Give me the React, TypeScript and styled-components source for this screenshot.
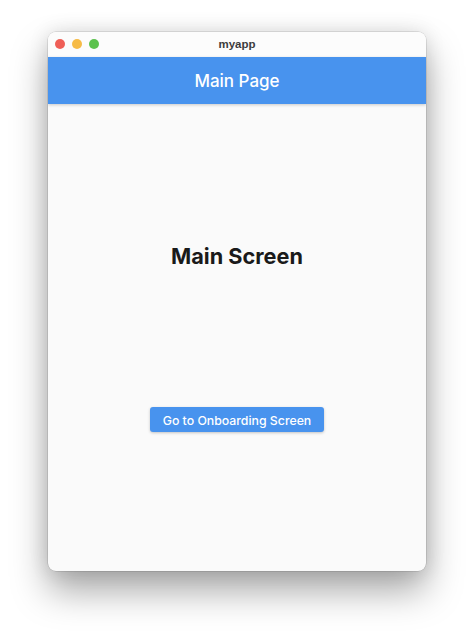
import React from "react";
import styled, { createGlobalStyle } from "styled-components";

const GlobalStyle = createGlobalStyle`
  html, body {
    margin: 0;
    height: 100%;
    background: #fff;
    overflow: hidden;
  }
`;

const Stage = styled.div`
  width: 474px;
  height: 634px;
  box-sizing: border-box;
  padding: 32px 48px 63px;
  font-family: Inter, "Liberation Sans", sans-serif;
`;

const Window = styled.div`
  height: 100%;
  display: flex;
  flex-direction: column;
  border-radius: 8px;
  overflow: hidden;
  background: #fafafa;
  box-shadow: 0 0 0 0.5px rgba(0, 0, 0, 0.18), 0 20px 36px rgba(0, 0, 0, 0.34),
    0 0 20px rgba(0, 0, 0, 0.12);
`;

const TitleBar = styled.div`
  position: relative;
  height: 24.5px;
  flex: none;
  display: flex;
  align-items: center;
  justify-content: center;
  background: #fcfcfc;
`;

const Lights = styled.div`
  position: absolute;
  left: 7px;
  top: 7px;
  display: flex;
  gap: 7px;
`;

const Light = styled.span<{ $color: string }>`
  width: 10px;
  height: 10px;
  border-radius: 50%;
  background: ${(p) => p.$color};
`;

const WindowTitle = styled.span`
  font-family: "Liberation Sans", Arial, sans-serif;
  font-size: 11.5px;
  font-weight: 700;
  color: #3d3d3d;
`;

const AppBar = styled.header`
  height: 47.5px;
  box-sizing: border-box;
  padding-top: 1px;
  flex: none;
  display: flex;
  align-items: center;
  justify-content: center;
  background: #4893ee;
  color: #fff;
  font-size: 17px;
  font-weight: 500;
  box-shadow: 0 1px 3px rgba(0, 0, 0, 0.2);
  z-index: 1;
`;

const Body = styled.main`
  flex: 1;
  display: flex;
  flex-direction: column;
  align-items: center;
  padding-top: 137px;
`;

const Heading = styled.h1`
  margin: 0 0 136px;
  font-size: 21.7px;
  line-height: 30px;
  font-weight: 700;
  color: #1a1a1a;
`;

const PrimaryButton = styled.button`
  width: 174px;
  height: 25px;
  padding: 1px 0 0;
  border: 0;
  border-radius: 3px;
  background: #4893ee;
  color: #fff;
  font-family: inherit;
  font-size: 12.3px;
  font-weight: 500;
  box-shadow: 0 1px 3px rgba(0, 0, 0, 0.22);
`;

export default function App() {
  return (
    <Stage>
      <GlobalStyle />
      <Window>
        <TitleBar>
          <Lights>
            <Light $color="#ef5f57" />
            <Light $color="#f6bb47" />
            <Light $color="#5cc24e" />
          </Lights>
          <WindowTitle>myapp</WindowTitle>
        </TitleBar>
        <AppBar>Main Page</AppBar>
        <Body>
          <Heading>Main Screen</Heading>
          <PrimaryButton>Go to Onboarding Screen</PrimaryButton>
        </Body>
      </Window>
    </Stage>
  );
}
